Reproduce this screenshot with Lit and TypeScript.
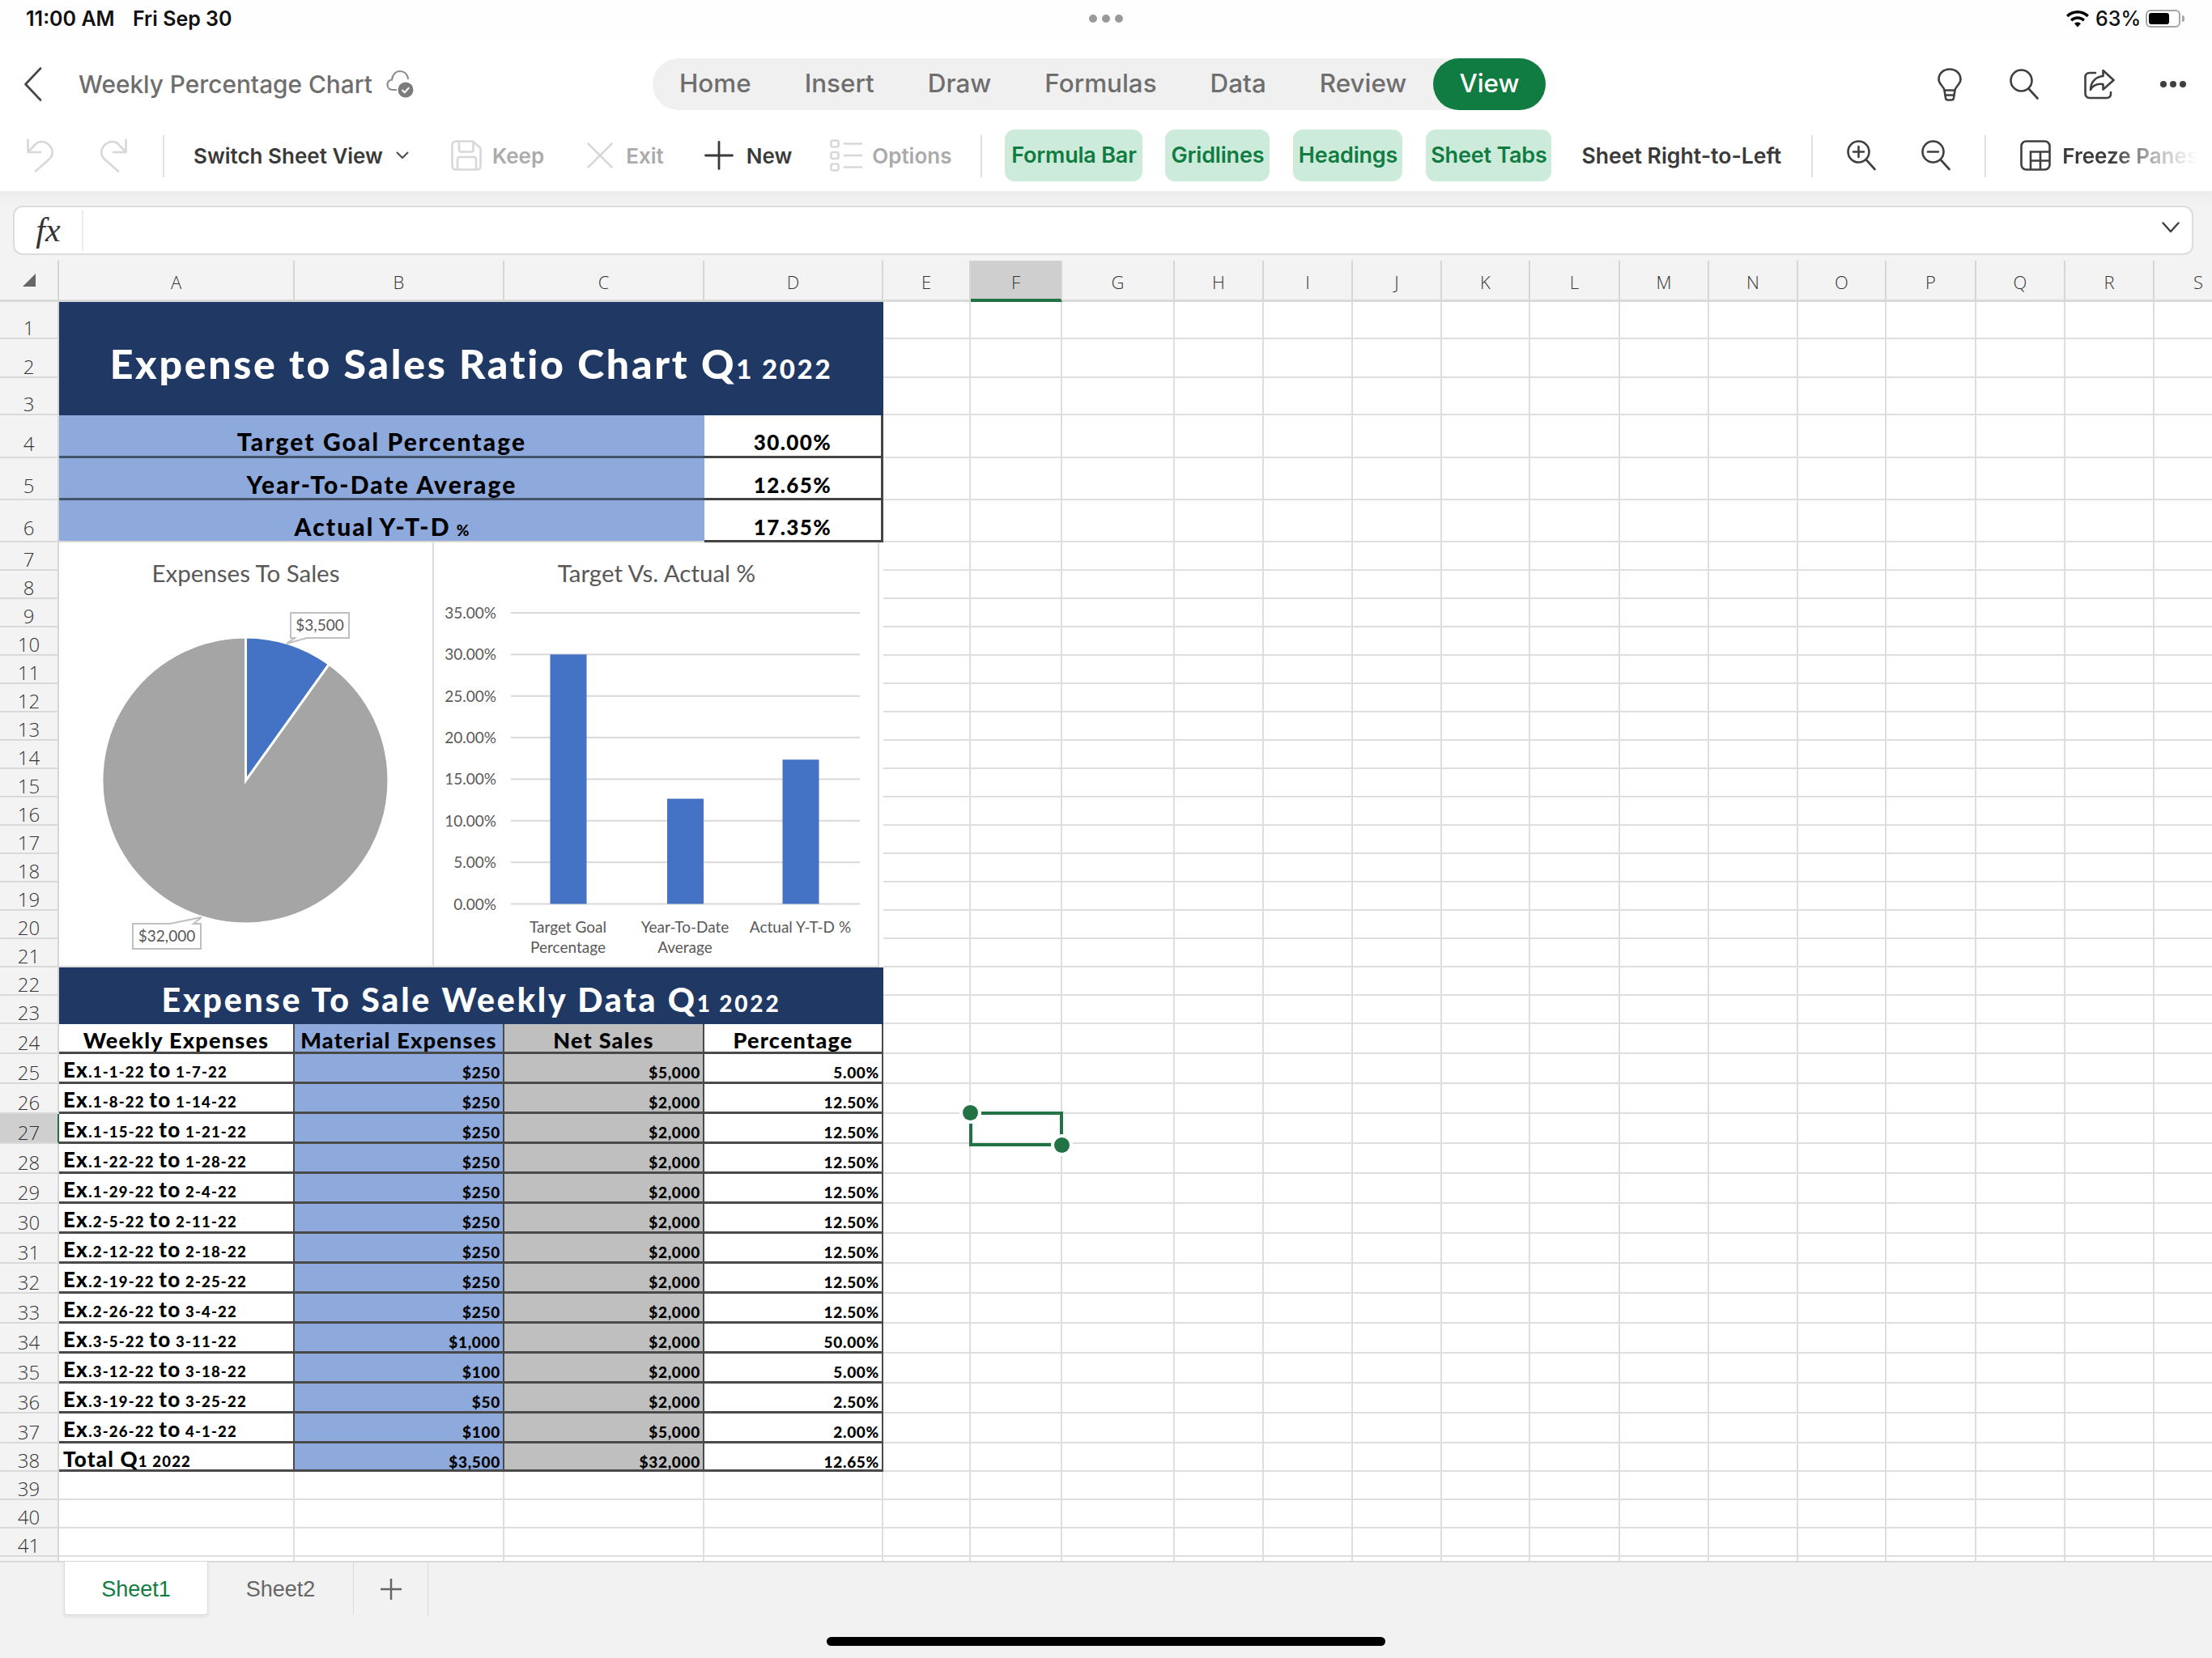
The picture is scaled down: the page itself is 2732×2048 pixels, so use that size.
import {LitElement, html, svg, css, nothing} from 'lit';
import {customElement} from 'lit/decorators.js';

const COLS = 'EFGHIJKLMNOPQRS'.split('');

const WEEKS = [
    ['1-1-22', '1-7-22', '$250', '$5,000', '5.00%'],
    ['1-8-22', '1-14-22', '$250', '$2,000', '12.50%'],
    ['1-15-22', '1-21-22', '$250', '$2,000', '12.50%'],
    ['1-22-22', '1-28-22', '$250', '$2,000', '12.50%'],
    ['1-29-22', '2-4-22', '$250', '$2,000', '12.50%'],
    ['2-5-22', '2-11-22', '$250', '$2,000', '12.50%'],
    ['2-12-22', '2-18-22', '$250', '$2,000', '12.50%'],
    ['2-19-22', '2-25-22', '$250', '$2,000', '12.50%'],
    ['2-26-22', '3-4-22', '$250', '$2,000', '12.50%'],
    ['3-5-22', '3-11-22', '$1,000', '$2,000', '50.00%'],
    ['3-12-22', '3-18-22', '$100', '$2,000', '5.00%'],
    ['3-19-22', '3-25-22', '$50', '$2,000', '2.50%'],
    ['3-26-22', '4-1-22', '$100', '$5,000', '2.00%'],
];

const SUMMARY = [
    {label: html`Target Goal Percentage`, value: '30.00%'},
    {label: html`Year-To-Date Average`, value: '12.65%'},
    {label: html`Actual Y-T-D <small>%</small>`, value: '17.35%'},
];

const TICKS = [35, 30, 25, 20, 15, 10, 5, 0];
const BARS = [
    {x: 143.5, value: 30, lines: ['Target Goal', 'Percentage']},
    {x: 288, value: 12.65, lines: ['Year-To-Date', 'Average']},
    {x: 430.5, value: 17.35, lines: ['Actual Y-T-D %']},
];
const AXIS_BOTTOM = 446.5;
const PX_PER_PERCENT = 10.27;

const ic = {
    back: html`<svg width="22" height="42" viewBox="0 0 22 42" fill="none" stroke="#444" stroke-width="2.6" stroke-linecap="round" stroke-linejoin="round"><path d="M20 1.5 1.5 21 20 40.5"/></svg>`,
    cloud: html`<svg width="34" height="36" viewBox="0 0 34 36"><path d="M12 25H8C4 25 1.5 22 1.5 18.500C1.500 15 4 13 7 12.500C8 6 12 2 17 2C22 2 26 5.500 27 11" fill="none" stroke="#8c8c8c" stroke-width="2.200" stroke-linecap="round"/><circle cx="24" cy="25" r="9.500" fill="#7c7c7c"/><path d="M19.500 25l3.200 3.200 5.500-6" fill="none" stroke="#fff" stroke-width="2"/></svg>`,
    undo: html`<svg width="34" height="42" viewBox="0 0 34 42" fill="none" stroke="#d8d8d8" stroke-width="2.600" stroke-linecap="round" stroke-linejoin="round"><path d="M1.500 1.500V17H17M1.500 17 11 7C15 3 22 3 27 7.500C33 13 33 20 28.500 25L11 40.500"/></svg>`,
    redo: html`<svg width="34" height="42" viewBox="0 0 34 42" fill="none" stroke="#d8d8d8" stroke-width="2.600" stroke-linecap="round" stroke-linejoin="round"><path d="M32.500 1.500V17H17M32.500 17 23 7C19 3 12 3 7 7.500C1 13 1 20 5.500 25L23 40.500"/></svg>`,
    keep: html`<svg width="38" height="38" viewBox="0 0 38 38" fill="none" stroke="#d8d8d8" stroke-width="2.600" stroke-linejoin="round"><path d="M6 1.500H27L36.500 10V32C36.500 35 34.500 36.500 32 36.500H6C3 36.500 1.500 35 1.500 32V6C1.500 3 3 1.500 6 1.500Z"/><path d="M10 2V12C10 13.500 11 14.500 12.500 14.500H25C26.500 14.500 27.500 13.500 27.500 12V2M8 36V24C8 22 9 21 11 21H28C30 21 31 22 31 24V36"/></svg>`,
    exit: html`<svg width="32" height="32" viewBox="0 0 32 32" fill="none" stroke="#d8d8d8" stroke-width="2.600" stroke-linecap="round"><path d="M1.500 1.500 30.500 30.500M30.500 1.500 1.500 30.500"/></svg>`,
    plus: html`<svg width="36" height="36" viewBox="0 0 36 36" fill="none" stroke="#3a3a3a" stroke-width="2.800" stroke-linecap="round"><path d="M18 1.500V34.500M1.500 18H34.500"/></svg>`,
    options: html`<svg width="41" height="40" viewBox="0 0 41 40" fill="none" stroke="#d8d8d8" stroke-width="2.600"><rect x="1.500" y="1.500" width="9" height="8" rx="2"/><rect x="1.500" y="16" width="9" height="8" rx="2"/><rect x="1.500" y="30.500" width="9" height="8" rx="2"/><path d="M17 5.500H40M17 20H40M17 34.500H40"/></svg>`,
    chev: html`<svg width="16" height="10" viewBox="0 0 16 10" fill="none" stroke="#4a4a4a" stroke-width="2" stroke-linecap="round" stroke-linejoin="round"><path d="M1.500 1.500 8 8 14.500 1.500"/></svg>`,
    chevBig: html`<svg width="22" height="14" viewBox="0 0 22 14" fill="none" stroke="#3f3f3f" stroke-width="2.400" stroke-linecap="round" stroke-linejoin="round"><path d="M1.500 1.500 11 12 20.500 1.500"/></svg>`,
    bulb: html`<svg width="30" height="41" viewBox="0 0 30 41" fill="none" stroke="#3f3f3f" stroke-width="2.600" stroke-linejoin="round"><path d="M8.500 27.500C8 23 1.500 20 1.500 14C1.500 6.500 7.500 1.500 15 1.500C22.500 1.500 28.500 6.500 28.500 14C28.500 20 22 23 21.500 27.500Z"/><path d="M8.500 27.500 10 37C10.300 38.500 11 39.500 12.500 39.500H17.500C19 39.500 19.700 38.500 20 37L21.500 27.500M9.500 33.500H20.500"/></svg>`,
    search: html`<svg width="36" height="38" viewBox="0 0 36 38" fill="none" stroke="#3f3f3f" stroke-width="2.600" stroke-linecap="round"><circle cx="14.500" cy="14.500" r="13"/><path d="M23.500 24.500 34.500 36.500"/></svg>`,
    share: html`<svg width="38" height="38" viewBox="0 0 38 38" fill="none" stroke="#3f3f3f" stroke-width="2.600" stroke-linecap="round" stroke-linejoin="round"><path d="M14 5H7C3.500 5 1.500 7 1.500 10V30C1.500 34 3.500 36 7 36H28C31 36 33 34 33 31V29"/><path d="M23.500 2 36.500 14 23.500 25.500V19C17 18 11 20 8 26C8 17 14 9.500 23.500 9Z"/></svg>`,
    zoomIn: html`<svg width="36" height="38" viewBox="0 0 36 38" fill="none" stroke="#3f3f3f" stroke-width="2.600" stroke-linecap="round"><circle cx="14.500" cy="14.500" r="13"/><path d="M24 24.500 34.500 36M14.500 8V21M8 14.500H21"/></svg>`,
    zoomOut: html`<svg width="36" height="38" viewBox="0 0 36 38" fill="none" stroke="#3f3f3f" stroke-width="2.600" stroke-linecap="round"><circle cx="14.500" cy="14.500" r="13"/><path d="M24 24.500 34.500 36M8 14.500H21"/></svg>`,
    freeze: html`<svg width="38" height="38" viewBox="0 0 38 38" fill="none" stroke="#3f3f3f" stroke-width="2.600"><rect x="1.500" y="1.500" width="35" height="35" rx="6"/><path d="M13 36V14.500H36.500M13 25.500H36.500M25 14.500V36"/></svg>`,
    wifi: html`<svg width="28" height="21" viewBox="0 0 28 21"><path d="M14 0C19.500 0 24.300 2.200 28 5.800L25.600 8.200C22.500 5.200 18.500 3.500 14 3.500C9.500 3.500 5.500 5.200 2.400 8.200L0 5.800C3.700 2.200 8.500 0 14 0ZM14 7.300C17.500 7.300 20.500 8.600 23 11L20.600 13.400C18.800 11.700 16.500 10.700 14 10.700C11.500 10.700 9.200 11.700 7.400 13.400L5 11C7.500 8.600 10.500 7.300 14 7.300ZM14 14.500C15.500 14.500 16.900 15.100 18 16.100L14 20.500 10 16.100C11.100 15.100 12.500 14.500 14 14.500Z" fill="#000"/></svg>`,
};

@customElement('app-root')
export class AppRoot extends LitElement {
    static styles = css`
        :host {
            display: flex;
            flex-direction: column;
            width: 2732px;
            height: 2048px;
            overflow: hidden;
            position: relative;
            background: #f2f2f2;
            font-family: Inter, "Liberation Sans", sans-serif;
            color: #3a3a3a;
        }

        /* status bar */
        .status {
            height: 48px;
            flex: none;
            box-sizing: border-box;
            background: #fefefe;
            display: flex;
            align-items: center;
            padding: 0 0 2px 32px;
            font-size: 25px;
            font-weight: 600;
            color: #111;
        }
        .status .time {
            width: 132px;
            white-space: nowrap;
        }
        .status .date {
            width: 122px;
            white-space: nowrap;
        }
        .status .dots {
            margin-left: 1059px;
            width: 1207px;
            display: flex;
            gap: 6px;
        }
        .status .dots i {
            width: 10px;
            height: 10px;
            border-radius: 50%;
            background: #9a9a9a;
        }
        .status .pct {
            margin-left: 8px;
            width: 55px;
            white-space: nowrap;
            font-size: 25px;
            font-weight: 500;
        }
        .battery {
            margin-left: 7px;
            width: 43px;
            height: 22px;
            border: 2px solid #a5a5a5;
            border-radius: 6px;
            box-sizing: border-box;
            padding: 2px;
            position: relative;
        }
        .battery i {
            display: block;
            width: 25px;
            height: 14px;
            background: #000;
            border-radius: 3px;
        }
        .battery::after {
            content: '';
            position: absolute;
            right: -7px;
            top: 5px;
            width: 3px;
            height: 8px;
            background: #a5a5a5;
            border-radius: 0 3px 3px 0;
        }

        /* ribbon tabs */
        .top {
            height: 104px;
            flex: none;
            box-sizing: border-box;
            background: #fff;
            display: flex;
            align-items: center;
            padding: 8px 0 0 30px;
        }
        .doc {
            margin-left: 45px;
            font-size: 29.800px;
            font-weight: 500;
            color: #6e6e6e;
            width: 380px;
            white-space: nowrap;
        }
        .tabs {
            margin-left: 295px;
            height: 64px;
            border-radius: 32px;
            background: #f0f0f0;
            display: flex;
            align-items: center;
        }
        .tabs span {
            padding: 0 33px;
            font-size: 31.400px;
            font-weight: 500;
            color: #6e6e6e;
            height: 64px;
            line-height: 62px;
        }
        .tabs span.on {
            background: #107c41;
            color: #fff;
            border-radius: 32px;
            padding: 0 32px;
        }
        .top-right {
            margin-left: auto;
            display: flex;
            align-items: center;
            padding-right: 32px;
        }
        .top-right svg {
            display: block;
        }
        .more {
            display: flex;
            gap: 4px;
            margin-left: 56px;
        }
        .more i {
            width: 8px;
            height: 8px;
            background: #3f3f3f;
            border-radius: 50%;
        }
        .bulb-gap {
            margin-left: 59px;
        }
        .share-gap {
            margin-left: 56px;
        }

        /* toolbar */
        .toolbar {
            height: 84px;
            flex: none;
            background: #fff;
            display: flex;
            align-items: flex-start;
            padding-top: 8px;
            box-sizing: border-box;
            white-space: nowrap;
            overflow: hidden;
            font-size: 26px;
            font-weight: 600;
            color: #3a3a3a;
        }
        .toolbar > * {
            flex: none;
        }
        .tb {
            height: 64px;
            display: flex;
            align-items: center;
        }
        .tb.off {
            color: #ababab;
        }
        .sep {
            width: 2px;
            height: 52px;
            margin-top: 7px;
            background: #e0e0e0;
        }
        .chip {
            height: 64px;
            line-height: 64px;
            background: #cdebdb;
            color: #107c41;
            border-radius: 12px;
            text-align: center;
            font-size: 27px;
            letter-spacing: -0.2px;
        }
        .wide-label {
            font-size: 26.600px;
        }
        .fade {
            -webkit-mask-image: linear-gradient(90deg, #000 35%, rgba(0, 0, 0, 0.35) 70%, transparent 100%);
            mask-image: linear-gradient(90deg, #000 35%, rgba(0, 0, 0, 0.35) 70%, transparent 100%);
        }

        /* formula bar */
        .formula {
            height: 86px;
            flex: none;
            box-sizing: border-box;
            padding: 18px 23px 7px 16px;
            background: linear-gradient(#ececec, #f3f3f3 18px);
        }
        .formula-box {
            height: 61px;
            background: #fff;
            border: 2px solid #dcdcdc;
            border-radius: 12px;
            box-sizing: border-box;
            display: flex;
            align-items: center;
        }
        .fx {
            width: 85px;
            height: 50px;
            border-right: 2px solid #ececec;
            box-sizing: border-box;
            text-align: center;
            font-family: "Liberation Serif", serif;
            font-style: italic;
            font-size: 42px;
            line-height: 48px;
            color: #333;
        }
        .formula-box svg {
            margin-left: auto;
            margin-right: 15px;
            margin-bottom: 8px;
        }

        /* sheet */
        .sheet {
            height: 1608px;
            flex: none;
            overflow: hidden;
            display: grid;
            background: #fff;
            grid-template-columns: 73px 291px 259px 247px 221px 108px 113px 139px 110px 110px 110px 109px 111px 110px 110px 109px 111px 110px 110px 110px;
            grid-template-rows: 51px 46px 48px 46px 53px 52px 52px repeat(17, 35px) repeat(14, 37px) repeat(4, 35px);
        }
        .sheet > div {
            box-sizing: border-box;
            min-width: 0;
        }
        .corner {
            background: #f3f3f3;
            border-right: 2px solid #d6d6d6;
            border-bottom: 3px solid #d9d9d9;
            display: flex;
            align-items: center;
            padding-left: 28px;
        }
        .corner i {
            width: 0;
            height: 0;
            border-left: 16px solid transparent;
            border-bottom: 16px solid #666;
        }
        .ch {
            background: #f3f3f3;
            border-right: 2px solid #d6d6d6;
            border-bottom: 3px solid #d9d9d9;
            text-align: center;
            line-height: 52px;
            font-family: "Open Sans", sans-serif;
            font-weight: 300;
            font-size: 22px;
            color: #333;
        }
        .ch.on {
            background: #cfcfcf;
            border-bottom: 4px solid #217346;
        }
        .rh {
            background: #f3f3f3;
            border-right: 2px solid #d6d6d6;
            border-bottom: 2px solid #d9d9d9;
            display: flex;
            align-items: flex-end;
            justify-content: center;
            font-family: "Open Sans", sans-serif;
            font-weight: 300;
            font-size: 24px;
            line-height: 25px;
            color: #333;
        }
        .rh.tall {
            padding-bottom: 4px;
        }
        .rh.on {
            background: #cfcfcf;
            border-right: 2px solid #217346;
        }
        .c {
            border-right: 2px solid #dedede;
            border-bottom: 2px solid #dedede;
            position: relative;
        }
        .title, .section {
            grid-column: span 4;
            background: #203864;
            color: #fff;
            font-family: Lato, sans-serif;
            font-weight: 900;
            display: flex;
            align-items: center;
            justify-content: center;
            white-space: nowrap;
        }
        .title {
            grid-row: span 3;
            font-size: 50px;
            padding-top: 12px;
            letter-spacing: 2.700px;
        }
        .title small {
            font-size: 33px;
        }
        .section {
            grid-row: span 2;
            font-size: 41px;
            padding-top: 8px;
            letter-spacing: 2.800px;
        }
        .section small {
            font-size: 28px;
        }
        .small-sep {
            margin-left: 0.3em;
        }
        .lab, .val, .th, .td {
            font-family: Lato, sans-serif;
            font-weight: 900;
            color: #000;
            white-space: nowrap;
        }
        .lab {
            grid-column: span 3;
            background: #8ea9db;
            text-align: center;
            font-size: 30px;
            letter-spacing: 2.100px;
            line-height: 64px;
            border-bottom: 3px solid #44546a;
        }
        .lab small {
            font-size: 19px;
            letter-spacing: 0;
        }
        .lab.last {
            border-bottom: 2px solid #d9d9d9;
            word-spacing: -2px;
        }
        .val {
            background: #fff;
            text-align: center;
            font-size: 26px;
            letter-spacing: 1.400px;
            line-height: 66px;
            border-right: 3px solid #444;
            border-bottom: 3px solid #444;
        }
        .charts {
            grid-column: span 4;
            grid-row: span 15;
            display: flex;
            padding-right: 4px;
            background: #fff;
        }
        .chart {
            border-right: 2px solid #dcdcdc;
            border-bottom: 2px solid #dcdcdc;
            height: 525px;
            box-sizing: border-box;
        }
        .chart.pie {
            width: 463px;
        }
        .chart.bar {
            width: 550px;
        }
        .chart svg {
            display: block;
            font-family: Lato, sans-serif;
            fill: #595959;
        }
        .chart-title {
            font-size: 29.500px;
            text-anchor: middle;
        }
        .chart-small {
            font-size: 19px;
        }
        .th {
            text-align: center;
            font-size: 27px;
            letter-spacing: 1.250px;
            line-height: 39px;
            border-right: 2px solid #4a4a4a;
            border-bottom: 3px solid #4a4a4a;
        }
        .td {
            border-right: 2px solid #4a4a4a;
            border-bottom: 3px solid #4a4a4a;
            font-size: 19px;
            letter-spacing: 0.700px;
            line-height: 46px;
            text-align: right;
            padding-right: 3px;
        }
        .td.name {
            text-align: left;
            padding-left: 5px;
            padding-right: 0;
            font-size: 18.500px;
            letter-spacing: 1.200px;
            line-height: 38px;
        }
        .td.name b {
            font-size: 26px;
            font-weight: 900;
        }
        .blue {
            background: #8ea9db;
        }
        .gray {
            background: #bfbfbf;
        }
        .sel {
            position: absolute;
            left: -2px;
            top: -3px;
            width: 116px;
            height: 43px;
            box-sizing: border-box;
            border: 4px solid #217346;
            z-index: 2;
        }
        .sel i {
            position: absolute;
            width: 19px;
            height: 19px;
            border-radius: 50%;
            background: #217346;
            box-shadow: 0 0 0 4px #fff;
        }
        .sel i.a {
            left: -12px;
            top: -12px;
        }
        .sel i.b {
            right: -12px;
            bottom: -12px;
        }

        /* sheet tabs */
        .sheets {
            flex: 1;
            background: #f2f2f2;
            border-top: 2px solid #d9d9d9;
            display: flex;
            align-items: flex-start;
            padding-left: 79px;
            margin-top: -2px;
            font-family: "Liberation Sans", sans-serif;
            font-size: 27px;
            color: #666;
            position: relative;
            z-index: 3;
        }
        .sheet-tab {
            width: 178px;
            height: 66px;
            box-sizing: border-box;
            background: #fff;
            color: #107c41;
            border: 1px solid #dcdcdc;
            border-top: none;
            border-radius: 0 0 4px 4px;
            box-shadow: 0 2px 5px rgba(0, 0, 0, 0.08);
            text-align: center;
            line-height: 68px;
            margin-top: -1px;
        }
        .sheet-tab.plain {
            width: 180px;
            background: none;
            color: #666;
            border: none;
            box-shadow: none;
            border-right: 1px solid #d9d9d9;
        }
        .sheet-add {
            width: 92px;
            height: 66px;
            box-sizing: border-box;
            border-right: 1px solid #d9d9d9;
            display: flex;
            align-items: center;
            justify-content: center;
        }
        .home {
            position: absolute;
            left: 1021px;
            top: 2022px;
            width: 690px;
            height: 11px;
            border-radius: 6px;
            background: #000;
            z-index: 5;
        }
    `;

    private blanks(n: number) {
        return COLS.map((col) => html`<div class="c">${col === 'F' && n === 27 ? html`<div class="sel"><i class="a"></i><i class="b"></i></div>` : nothing}</div>`);
    }

    private head(n: number) {
        const cls = n === 27 ? 'on' : n >= 4 && n <= 6 ? 'tall' : '';
        return html`<div class="rh ${cls}">${n < 42 ? n : ''}</div>`;
    }

    private pie() {
        return html`<svg width="461" height="523">
            <text class="chart-title" x="230.500" y="49">Expenses To Sales</text>
            <path d="M230.500 294 333.300 150.300A177 177 0 1 1 230.500 117Z" fill="#a5a5a5" stroke="#fff" stroke-width="3"/>
            <path d="M230.500 294V117A177 177 0 0 1 333.300 150.300Z" fill="#4472c4" stroke="#fff" stroke-width="3"/>
            <path d="M286 87H358V118H306L281 125 291 118H286Z" fill="#fff" stroke="#bfbfbf" stroke-width="2"/>
            <text class="chart-small" x="322" y="109" text-anchor="middle">$3,500</text>
            <path d="M91 471H137L176 463 166 471H175V502H91Z" fill="#fff" stroke="#bfbfbf" stroke-width="2"/>
            <text class="chart-small" x="133" y="493" text-anchor="middle">$32,000</text>
        </svg>`;
    }

    private bars() {
        return html`<svg width="548" height="523">
            <text class="chart-title" x="275" y="49">Target Vs. Actual %</text>
            ${TICKS.map((t) => {
                const y = AXIS_BOTTOM - t * PX_PER_PERCENT;
                return svg`
                    <rect x="95" y=${y - 1} width="431" height="2" fill="#d9d9d9"></rect>
                    <text class="chart-small" x="77" y=${y + 7} text-anchor="end">${t}.00%</text>
                `;
            })}
            ${BARS.map((b) => {
                const h = b.value * PX_PER_PERCENT;
                return svg`
                    <rect x=${b.x} y=${AXIS_BOTTOM - h} width="45" height=${h} fill="#4472c4"></rect>
                    ${b.lines.map((l, i) => svg`<text class="chart-small" x=${b.x + 22} y=${482 + i * 25} text-anchor="middle">${l}</text>`)}
                `;
            })}
        </svg>`;
    }

    private row(n: number) {
        if (n === 1) {
            return html`<div class="title"><span>Expense to Sales Ratio Chart Q<small>1</small><small class="small-sep">2022</small></span></div>`;
        }
        if (n >= 4 && n <= 6) {
            const s = SUMMARY[n - 4];
            return html`<div class="lab ${n === 6 ? 'last' : ''}">${s.label}</div><div class="val">${s.value}</div>`;
        }
        if (n === 7) {
            return html`<div class="charts"><div class="chart pie">${this.pie()}</div><div class="chart bar">${this.bars()}</div></div>`;
        }
        if (n === 22) {
            return html`<div class="section"><span>Expense To Sale Weekly Data Q<small>1</small><small class="small-sep">2022</small></span></div>`;
        }
        if (n === 24) {
            return html`
                <div class="th">Weekly Expenses</div>
                <div class="th blue">Material Expenses</div>
                <div class="th gray">Net Sales</div>
                <div class="th">Percentage</div>
            `;
        }
        if (n >= 25 && n <= 37) {
            const w = WEEKS[n - 25];
            return html`
                <div class="td name"><b>Ex</b>.${w[0]} <b>to</b> ${w[1]}</div>
                <div class="td blue">${w[2]}</div>
                <div class="td gray">${w[3]}</div>
                <div class="td">${w[4]}</div>
            `;
        }
        if (n === 38) {
            return html`
                <div class="td name"><b>Total Q</b>1 2022</div>
                <div class="td blue">$3,500</div>
                <div class="td gray">$32,000</div>
                <div class="td">12.65%</div>
            `;
        }
        if (n >= 39) {
            return html`<div class="c"></div><div class="c"></div><div class="c"></div><div class="c"></div>`;
        }
        return nothing;
    }

    render() {
        const rows = Array.from({length: 42}, (_, i) => i + 1);
        return html`
            <div class="status">
                <span class="time">11:00 AM</span><span class="date">Fri Sep 30</span>
                <div class="dots"><i></i><i></i><i></i></div>
                ${ic.wifi}<span class="pct">63%</span>
                <div class="battery"><i></i></div>
            </div>
            <div class="top">
                ${ic.back}
                <span class="doc">Weekly Percentage Chart</span>
                ${ic.cloud}
                <div class="tabs">
                    <span>Home</span><span>Insert</span><span>Draw</span><span>Formulas</span><span>Data</span><span>Review</span><span class="on">View</span>
                </div>
                <div class="top-right">
                    ${ic.bulb}<span class="bulb-gap">${ic.search}</span><span class="share-gap">${ic.share}</span>
                    <div class="more"><i></i><i></i><i></i></div>
                </div>
            </div>
            <div class="toolbar">
                <div class="tb" style="margin-left:33px">${ic.undo}</div>
                <div class="tb" style="margin-left:56px">${ic.redo}</div>
                <div class="sep" style="margin-left:44px"></div>
                <div class="tb" style="margin-left:36px">Switch Sheet View</div>
                <div class="tb" style="margin-left:16px">${ic.chev}</div>
                <div class="tb off" style="margin-left:52px;gap:13px">${ic.keep}Keep</div>
                <div class="tb off" style="margin-left:53px;gap:16px">${ic.exit}Exit</div>
                <div class="tb" style="margin-left:50px;gap:16px">${ic.plus}New</div>
                <div class="tb off" style="margin-left:47px;gap:11px">${ic.options}Options</div>
                <div class="sep" style="margin-left:36px"></div>
                <div class="chip" style="margin-left:28px;width:170px">Formula Bar</div>
                <div class="chip" style="margin-left:28px;width:129px">Gridlines</div>
                <div class="chip" style="margin-left:29px;width:135px">Headings</div>
                <div class="chip" style="margin-left:29px;width:155px">Sheet Tabs</div>
                <div class="tb wide-label" style="margin-left:37px">Sheet Right-to-Left</div>
                <div class="sep" style="margin-left:37px"></div>
                <div class="tb" style="margin-left:42px">${ic.zoomIn}</div>
                <div class="tb" style="margin-left:56px">${ic.zoomOut}</div>
                <div class="sep" style="margin-left:42px"></div>
                <div class="tb" style="margin-left:42px">${ic.freeze}</div>
                <div class="tb fade" style="margin-left:14px">Freeze Panes</div>
            </div>
            <div class="formula">
                <div class="formula-box">
                    <div class="fx">fx</div>
                    ${ic.chevBig}
                </div>
            </div>
            <div class="sheet">
                <div class="corner"><i></i></div>
                ${['A', 'B', 'C', 'D', ...COLS].map((c) => html`<div class="ch ${c === 'F' ? 'on' : ''}">${c}</div>`)}
                ${rows.map((n) => html`${this.head(n)}${this.row(n)}${this.blanks(n)}`)}
            </div>
            <div class="sheets">
                <div class="sheet-tab">Sheet1</div>
                <div class="sheet-tab plain">Sheet2</div>
                <div class="sheet-add"><svg width="26" height="26" viewBox="0 0 26 26" fill="none" stroke="#666" stroke-width="2.500"><path d="M13 0V26M0 13H26"/></svg></div>
            </div>
            <div class="home"></div>
        `;
    }
}
